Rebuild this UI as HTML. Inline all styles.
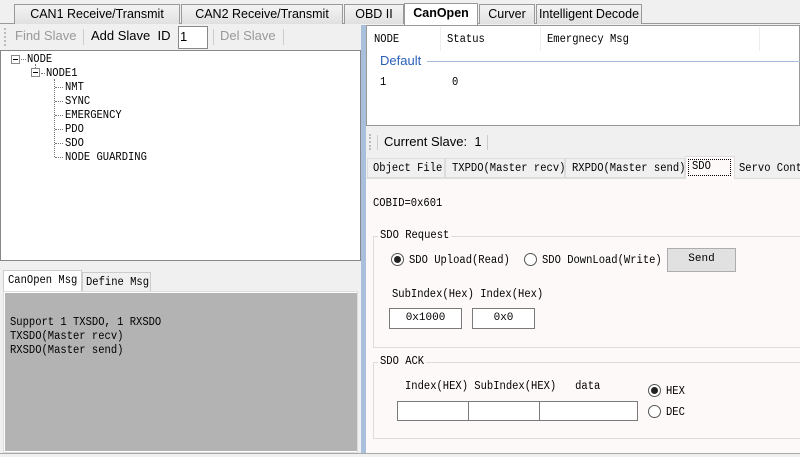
<!DOCTYPE html>
<html><head><style>
*{box-sizing:border-box;margin:0;padding:0}
body{width:800px;height:457px;overflow:hidden;background:#f0f0f0;font-family:"Liberation Sans",sans-serif;font-size:13px;position:relative;color:#000}
.a{position:absolute;white-space:nowrap}
.m{font-family:"Liberation Mono",monospace;font-size:10.5px;white-space:pre;transform:scaleY(1.15);transform-origin:0 0}
.tab{position:absolute;top:4px;height:20px;border:1px solid #999;border-bottom:none;background:linear-gradient(#f4f4f4,#e0e0e0);padding:2px 0 0 0;text-align:center;font-size:12.5px;white-space:nowrap;overflow:hidden}
.box{position:absolute;background:#fff;border:1px solid #aaa}
.rad{position:absolute;width:13px;height:13px;border:1px solid #555;border-radius:50%;background:#fff}
.rad.on::after{content:"";position:absolute;left:2px;top:2px;width:7px;height:7px;border-radius:50%;background:#222}
.dl{position:absolute;border-left:1px dotted #777}
.dh{position:absolute;border-top:1px dotted #777}
</style></head><body>
<div class="a" style="left:0;top:0;width:800px;height:24px;background:#f0f0f0;border-bottom:1px solid #999"></div>
<div class="tab" style="left:14px;width:166px">CAN1 Receive/Transmit</div>
<div class="tab" style="left:181px;width:162px">CAN2 Receive/Transmit</div>
<div class="tab" style="left:344px;width:60px">OBD II</div>
<div class="tab" style="left:404px;width:74px;top:3px;height:22px;background:#fff;font-weight:bold">CanOpen</div>
<div class="tab" style="left:479px;width:56px">Curver</div>
<div class="tab" style="left:536px;width:106px">Intelligent Decode</div>

<div class="a" style="left:4px;top:28px;height:18px;border-left:2px dotted #bbb"></div>
<div class="a" style="left:15px;top:28px;color:#999">Find Slave</div>
<div class="a" style="left:83px;top:29px;height:16px;border-left:1px solid #ccc"></div>
<div class="a" style="left:91px;top:28px">Add Slave&nbsp; ID</div>
<div class="box" style="left:178px;top:26px;width:30px;height:23px;border-color:#888;padding:2px 1px">1</div>
<div class="a" style="left:213px;top:29px;height:16px;border-left:1px solid #ccc"></div>
<div class="a" style="left:220px;top:28px;color:#999">Del Slave</div>
<div class="a" style="left:283px;top:29px;height:16px;border-left:1px solid #ccc"></div>

<div class="box" style="left:0;top:50px;width:361px;height:211px;border-color:#888"></div>
<div class="a" style="left:11px;top:55px;width:9px;height:9px;border:1px solid #888;background:#fff"><div class="a" style="left:1px;top:3px;width:5px;border-top:1px solid #000"></div></div>
<div class="a" style="left:31px;top:68px;width:9px;height:9px;border:1px solid #888;background:#fff"><div class="a" style="left:1px;top:3px;width:5px;border-top:1px solid #000"></div></div>
<div class="dh" style="left:21px;top:59px;width:5px"></div>
<div class="dl" style="left:35px;top:64px;height:4px"></div>
<div class="dh" style="left:41px;top:73px;width:4px"></div>
<div class="dl" style="left:54px;top:79px;height:78px"></div>
<div class="dh" style="left:55px;top:87px;width:8px"></div>
<div class="dh" style="left:55px;top:101px;width:8px"></div>
<div class="dh" style="left:55px;top:115px;width:8px"></div>
<div class="dh" style="left:55px;top:129px;width:8px"></div>
<div class="dh" style="left:55px;top:143px;width:8px"></div>
<div class="dh" style="left:55px;top:157px;width:8px"></div>
<div class="a m" style="left:27px;top:53px">NODE</div>
<div class="a m" style="left:46px;top:67px">NODE1</div>
<div class="a m" style="left:65px;top:81px">NMT</div>
<div class="a m" style="left:65px;top:95px">SYNC</div>
<div class="a m" style="left:65px;top:109px">EMERGENCY</div>
<div class="a m" style="left:65px;top:123px">PDO</div>
<div class="a m" style="left:65px;top:137px">SDO</div>
<div class="a m" style="left:65px;top:151px">NODE GUARDING</div>

<div class="a" style="left:3px;top:270px;width:79px;height:22px;background:#fff;border:1px solid #ccc;border-bottom:none"></div>
<div class="a m" style="left:8px;top:274px">CanOpen Msg</div>
<div class="a" style="left:82px;top:272px;width:69px;height:20px;border:1px solid #ccc;border-bottom:none"></div>
<div class="a m" style="left:86px;top:276px">Define Msg</div>
<div class="a" style="left:3px;top:291px;width:355px;height:162px;background:#fff;border:1px solid #ddd"></div>
<div class="a" style="left:5px;top:293px;width:352px;height:158px;background:#b3b3b3"></div>
<div class="a m" style="left:10px;top:316px;line-height:12px">Support 1 TXSDO, 1 RXSDO
TXSDO(Master recv)
RXSDO(Master send)</div>

<div class="a" style="left:361px;top:25px;width:5px;height:432px;background:#a9c0dd"></div>

<div class="box" style="left:366px;top:25px;width:434px;height:101px;border-color:#999"></div>
<div class="a" style="left:440px;top:27px;height:24px;border-left:1px solid #eee"></div>
<div class="a" style="left:540px;top:27px;height:24px;border-left:1px solid #eee"></div>
<div class="a" style="left:759px;top:27px;height:24px;border-left:1px solid #eee"></div>
<div class="a m" style="left:374px;top:33px">NODE</div>
<div class="a m" style="left:447px;top:33px">Status</div>
<div class="a m" style="left:547px;top:33px">Emergnecy Msg</div>
<div class="a" style="left:380px;top:53px;color:#2a5fb8">Default</div>
<div class="a" style="left:427px;top:61px;width:373px;border-top:1px solid #a8bde0"></div>
<div class="a m" style="left:380px;top:76px">1</div>
<div class="a m" style="left:452px;top:76px">0</div>

<div class="a" style="left:369px;top:134px;height:16px;border-left:2px dotted #bbb"></div>
<div class="a" style="left:377px;top:135px;height:15px;border-left:1px solid #ccc"></div>
<div class="a" style="left:384px;top:134px">Current Slave:&nbsp; 1</div>
<div class="a" style="left:487px;top:135px;height:15px;border-left:1px solid #ccc"></div>

<div class="a" style="left:366px;top:178px;width:434px;height:275px;background:#fcf9f8;border-top:1px solid #ddd"></div>
<div class="a" style="left:367px;top:158px;width:78px;height:20px;border:1px solid #ddd"></div>
<div class="a" style="left:445px;top:158px;width:120px;height:20px;border:1px solid #ddd"></div>
<div class="a" style="left:565px;top:158px;width:120px;height:20px;border:1px solid #ddd"></div>
<div class="a" style="left:685px;top:156px;width:50px;height:23px;background:#fcf9f8;border:1px solid #ddd;border-bottom:none"></div>
<div class="a" style="left:688px;top:159px;width:43px;height:17px;border:1px dotted #000"></div>
<div class="a m" style="left:373px;top:162px">Object File</div>
<div class="a m" style="left:452px;top:162px">TXPDO(Master recv)</div>
<div class="a m" style="left:572px;top:162px">RXPDO(Master send)</div>
<div class="a m" style="left:692px;top:160px">SDO</div>
<div class="a m" style="left:739px;top:162px">Servo Cont</div>

<div class="a m" style="left:373px;top:197px">COBID=0x601</div>

<div class="a" style="left:373px;top:236px;width:430px;height:112px;border:1px solid #ddd"></div>
<div class="a m" style="left:378px;top:229px;background:#fcf9f8;padding:0 2px">SDO Request</div>
<div class="rad on" style="left:391px;top:253px"></div>
<div class="a m" style="left:409px;top:254px">SDO Upload(Read)</div>
<div class="rad" style="left:524px;top:253px"></div>
<div class="a m" style="left:542px;top:254px">SDO DownLoad(Write)</div>
<div class="a" style="left:667px;top:248px;width:69px;height:24px;background:#e1e1e1;border:1px solid #adadad;text-align:center;padding-top:4px;font-family:'Liberation Mono',monospace;font-size:11px">Send</div>
<div class="a m" style="left:392px;top:288px">SubIndex(Hex) Index(Hex)</div>
<div class="a" style="left:389px;top:308px;width:73px;height:21px;background:#fff;border:1px solid #7a7a7a;text-align:center;padding-top:3px;font-family:'Liberation Mono',monospace;font-size:11px">0x1000</div>
<div class="a" style="left:472px;top:308px;width:63px;height:21px;background:#fff;border:1px solid #7a7a7a;text-align:center;padding-top:3px;font-family:'Liberation Mono',monospace;font-size:11px">0x0</div>

<div class="a" style="left:373px;top:362px;width:430px;height:77px;border:1px solid #ddd"></div>
<div class="a m" style="left:378px;top:355px;background:#fcf9f8;padding:0 2px">SDO ACK</div>
<div class="a m" style="left:405px;top:380px">Index(HEX) SubIndex(HEX)   data</div>
<div class="a" style="left:397px;top:401px;width:241px;height:20px;background:#fff;border:1px solid #7a7a7a"></div>
<div class="a" style="left:468px;top:401px;height:20px;border-left:1px solid #7a7a7a"></div>
<div class="a" style="left:539px;top:401px;height:20px;border-left:1px solid #7a7a7a"></div>
<div class="rad on" style="left:648px;top:384px"></div>
<div class="a m" style="left:666px;top:385px">HEX</div>
<div class="rad" style="left:648px;top:405px"></div>
<div class="a m" style="left:666px;top:406px">DEC</div>

<div class="a" style="left:0;top:453px;width:800px;height:4px;background:#f0f0f0;border-top:1px solid #aaa"></div>
</body></html>
